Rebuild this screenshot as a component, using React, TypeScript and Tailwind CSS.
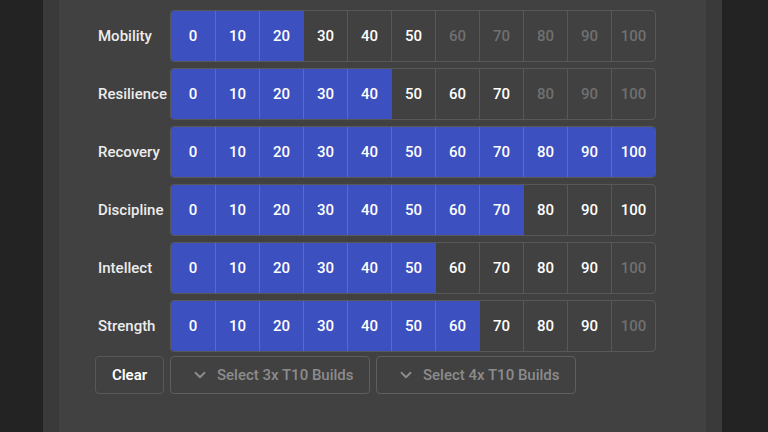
import React from "react";
import { ChevronDown } from "lucide-react";

interface StatRow {
  name: string;
  selected: number; // highest selected tier index
  enabledUpTo: number; // highest enabled tier index
}

const tiers = [0, 10, 20, 30, 40, 50, 60, 70, 80, 90, 100];

const rows: StatRow[] = [
  { name: "Mobility", selected: 2, enabledUpTo: 5 },
  { name: "Resilience", selected: 4, enabledUpTo: 7 },
  { name: "Recovery", selected: 10, enabledUpTo: 10 },
  { name: "Discipline", selected: 7, enabledUpTo: 10 },
  { name: "Intellect", selected: 5, enabledUpTo: 9 },
  { name: "Strength", selected: 6, enabledUpTo: 9 },
];

const TierGroup: React.FC<{ row: StatRow }> = ({ row }) => (
  <div className="flex h-[52px] rounded-[4px] overflow-hidden border border-[#585858]">
    {tiers.map((t, i) => {
      const isSelected = i <= row.selected;
      const isEnabled = i <= row.enabledUpTo;
      return (
        <div
          key={t}
          className={
            "w-[44px] flex items-center justify-center text-[15px] font-medium " +
            (i > 0 ? "border-l " : "") +
            (isSelected
              ? "bg-[#3d50bf] text-white border-[#5a6acb]"
              : isEnabled
              ? "text-white border-[#585858]"
              : "text-[#707070] border-[#585858]")
          }
        >
          {t}
        </div>
      );
    })}
  </div>
);

const App: React.FC = () => {
  return (
    <div
      className="h-[432px] w-[768px] bg-[#232323] flex overflow-hidden pl-[43px]"
      style={{ fontFamily: "Roboto, 'Liberation Sans', sans-serif" }}
    >
      <div className="w-[679px] bg-[#3a3a3a] px-[16px] flex">
        <div className="flex-1 bg-[#414141] pl-[36px] pt-[10px]">
          <div className="flex flex-col gap-[6px]">
            {rows.map((row) => (
              <div key={row.name} className="flex items-center">
                <div className="w-[75px] pl-[3px] text-[15px] font-medium text-[#ececec] whitespace-nowrap">
                  {row.name}
                </div>
                <TierGroup row={row} />
              </div>
            ))}
          </div>

          <div className="flex gap-[6px] mt-[4px]">
            <button className="w-[69px] h-[38px] rounded-[4px] border border-[#585858] text-[15px] font-semibold text-white">
              Clear
            </button>
            <button className="w-[200px] h-[38px] rounded-[4px] border border-[#5e5e5e] flex items-center pl-[20px] gap-[8px] text-[15px] font-medium text-[#8c8c8c]">
              <ChevronDown className="w-[18px] h-[18px]" strokeWidth={2.5} />
              Select 3x T10 Builds
            </button>
            <button className="w-[200px] h-[38px] rounded-[4px] border border-[#5e5e5e] flex items-center pl-[20px] gap-[8px] text-[15px] font-medium text-[#8c8c8c]">
              <ChevronDown className="w-[18px] h-[18px]" strokeWidth={2.5} />
              Select 4x T10 Builds
            </button>
          </div>
        </div>
      </div>
    </div>
  );
};

export default App;
